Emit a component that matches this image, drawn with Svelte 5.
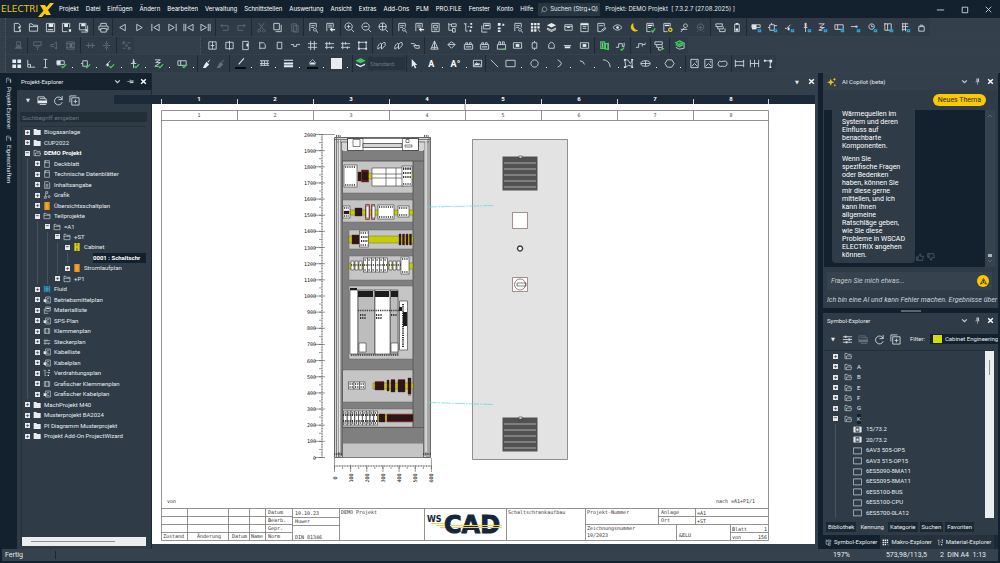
<script lang="ts">
	type Icon = { l?: string; f?: string; g?: string; c?: string; y?: string; o?: string };
	type Node = { depth: number; label: string; icon?: string; open?: boolean; leaf?: boolean; bold?: boolean; selected?: boolean };

	const menu = [
		'Projekt', 'Datei', 'Einfügen', 'Ändern', 'Bearbeiten', 'Verwaltung', 'Schnittstellen', 'Auswertung',
		'Ansicht', 'Extras', 'Add-Ons', 'PLM', 'PRO.FILE', 'Fenster', 'Konto', 'Hilfe'
	];

	// l = line, f = fill, g = green line, c = cyan line, y = yellow fill, o = orange fill
	const icons: Record<string, Icon> = {
		new: { l: 'M7 1.5H2.5v9H8M7 1.5l2 2V6', f: 'M7 5h2v2H7zM8 8h1.500v3H8z' },
		folder: { l: 'M1.500 10V2h3l1 1.500h5V10zM1.500 5h9' },
		save: { l: 'M1.500 1.500h9v9h-9z', f: 'M4 1.500h5v4H4zM3 8h6v1H3z' },
		saveas: { l: 'M9.500 6V1.500h-8v9H7', f: 'M3.500 1.500h4v4h-4zM8.500 8H11v2.500H8.500z' },
		saveall: { l: 'M1.500 1.500h7v7h-7zM10.500 4v7h-7', f: 'M3.500 1.500h4v3h-4zM8 8h2v2H8z' },
		print: { l: 'M3 4V1.500h6V4M3 8.500H1V4.500h10v4H9M3 7h6v4H3z' },
		left: { l: 'M9 2.500L3 6l6 3.500z' },
		right: { l: 'M3 2.500L9 6l-6 3.500z' },
		first: { l: 'M2 2v8M10 2.500L4 6l6 3.500z' },
		last: { l: 'M10 2v8M2 2.500L8 6 2 9.500z' },
		firstall: { l: 'M1 2v8M3 2v8M11 2.500L5 6l6 3.500z' },
		lastall: { l: 'M9 2v8M11 2v8M1 2.500L7 6 1 9.500z' },
		undo: { l: 'M4 2L2 4l2 2M2 4h8v5H4' },
		redo: { l: 'M8 2l2 2-2 2M10 4H2v5h6' },
		cut: { l: 'M3 1l5 7M9 1L4 8M3.500 8a1.500 1.500 0 1 0 .1 0M8.500 8a1.500 1.500 0 1 0 .1 0' },
		copy: { l: 'M2 1.500h6v7H2zM4 10.500h6V3' },
		paste: { l: 'M3 2h5v8H3zM5 4h5v7H5z' },
		find: { l: 'M2 10V1.500h7V6M3.500 4h4M3.500 6h3M7.500 7a1.500 1.500 0 1 0 .1 0M9 10l2 1.500' },
		listnext: { l: 'M2 10V1.500h7V6M3.500 3.500h4M3.500 5.500h4', f: 'M5 8l3-2v1.500h3v1.500H8V11z' },
		zoomin: { l: 'M5 1a4 4 0 1 0 .1 0M8 8l3 3M3 5h4M5 3v4' },
		zoomout: { l: 'M5 1a4 4 0 1 0 .1 0M8 8l3 3M3 5h4' },
		zoomfit: { l: 'M5 1a4 4 0 1 0 .1 0M8 8l3 3M1 5h8M5 1v8' },
		frame: { l: 'M2 1.500h8v9H2zM4 3.500h4v3H4zM4 8.500h4' },
		treeview: { l: 'M2 1v8h4M2 3h3M5 2h5v3H5zM6 7h3v4H6z' },
		list: { l: 'M1 2h3M3 2v8h2M5 5h2', f: 'M8 1h2v2H8zM8 4.500h2v2H8zM7 8.500h2v2H7z' },
		stack: { l: 'M4 1.500h7v6H4zM2 4v7h6', f: 'M5 3h5v1.500H5z' },
		blocks: { f: 'M2 1h3v3H2zM2 6h3v2H2zM2 9h3v2H2zM7 2h2v2H7z' },
		grid: { f: 'M1 1h2.500v2.500H1zM4.500 1H7v2.500H4.500zM8 1h2.500v2.500H8zM1 4.500h2.500V7H1zM4.500 4.500H7V7H4.500zM8 4.500h2.500V7H8zM1 8h2.500v2.500H1zM4.500 8H7v2.500H4.500z', l: 'M9 8l2 3' },
		layers: { f: 'M6 1l5 2.500L6 6 1 3.500zM1 6l5 2.500L11 6v1L6 9.500 1 7zM1 8.500L6 11l5-2.500v-1L6 10 1 7.500z' },
		box: { l: 'M2 3h8v6H2zM2 5h8', f: 'M4.500 5h3v1.500h-3z' },
		sheet: { l: 'M2 1.500h8v9H2zM4 5h4M4 7h4', f: 'M2 1.500h8v2H2z' },
		edit: { l: 'M9 5V1.500H2v9h4M3.500 4h4M6 9l4-3 1 1-4 3z' },
		eye: { l: 'M1 6q5-6 10 0-5 6-10 0z', f: 'M6 4.500a1.500 1.500 0 1 0 .1 0' },
		moon: { y: 'M5 1a4.800 4.800 0 1 0 5 8C6 9 4 5 5 1z' },
		sheetok: { l: 'M9 5V1.500H2v9h4M3.500 6h3', f: 'M3 3h5v1.500H3z', g: 'M7 9l1.500 2L11 7' },
		sheetadd: { l: 'M9 5V1.500H2v9h4', f: 'M3 3h5v1.500H3z', y: 'M9 6a2.500 2.500 0 1 0 .1 0zM9 7.500a1 1 0 1 1-.1 0z' },
		tool: { l: 'M7 2a2 2 0 1 0 .1 0M6 6l-4 5M2 8h7' },
		gear: { l: 'M6 2a3.500 3.500 0 1 0 .1 0M6 4v4M4 6h4M3 10l-1 1M9 10l1 1' },
		windows: { l: 'M1 2h7v3H1zM3 5v2.500h6V5M5 8v2.500h6V7' },
		battery: { l: 'M4 2.500h5v8H4z', f: 'M5 1h3v2H5zM5 7h3v2.500H5z' },
		devlink: { l: 'M1 3h9v3H1z', f: 'M1 3h5v5H1z', c: 'M8 8.500h2.500v2H8z' },
		devring: { l: 'M3 3h5v6H3zM1 6h2M8 4h3M5 1v2', c: 'M8 8.500h2.500v2H8z' },
		devpoint: { l: 'M1 7h2l4-4', f: 'M4 6h2v3H4z', c: 'M8 8.500h2.500v2H8z' },
		devpin: { l: 'M5 1v10M3 6h4', f: 'M4 1h2v4H4z', c: 'M8 8.500h2.500v2H8z' },
		devcoil: { l: 'M2 2h6L3 6h5L2 9h4', c: 'M8 8.500h2.500v2H8z' },
		devbox: { l: 'M1 3h9v5H1zM4 3v5', c: 'M8 8.500h2.500v2H8z' },
		devline: { l: 'M1 5h7', f: 'M6 4h2v2H6z', c: 'M8 8.500h2.500v2H8z' },
		devclock: { l: 'M5 2a3 3 0 1 0 .1 0M5 3v2h2', c: 'M8 8.500h2.500v2H8z' },
		devframe: { l: 'M2 2h7v7H2zM5 2v7M1 2h2', c: 'M8 8.500h2.500v2H8z' },
		devgrid: { l: 'M2 2h7M2 5h7M2 8h5M3 1v9M6 1v9', c: 'M8 8.500h2.500v2H8z' },
		lock: { l: 'M3 5h6v5H3zM4.500 5V3.500h3V5' },
		stamp: { l: 'M4 2h4v4H4zM2 9h8', f: 'M3 7h6v1.500H3z' },
		plug: { l: 'M2 2h8v4H2zM4 6l2 3 2-3M6 9v2' },
		sound: { l: 'M2 5h3l3-3v8L5 7H2z' },
		select: { l: 'M2 2h8v8H2zM1 4h10M1 8h10', f: 'M5 4h3v4H5z' },
		spread: { l: 'M1 6h10M4 3v6M8 3v6' },
		align: { l: 'M2 6h8M6 1v3M6 11V8M4 3l2 2 2-2M4 9l2-2 2 2' },
		scatter: { l: 'M2 2h2v2H2zM8 8h2v2H8zM7 3h3M2 9h3', f: 'M5 5h2v2H5z' },
		cross: { l: 'M2 2h8v8H2zM6 4v4M4 6h4M6 2v2M6 8v2' },
		cabinet: { l: 'M2 2.500h8v7H2zM6 1v10' },
		door: { l: 'M3 1.500h6v9H3z', f: 'M7 4h2v3H7z' },
		cap: { l: 'M3 2v8M3 3h4l2 2v4H3' },
		rect: { l: 'M3.500 2.500h5v7h-5z' },
		wire: { l: 'M1 5h3v2h3V5h4' },
		hash: { l: 'M1 4h10M1 8h10M4 1v10M8 1v10' },
		hash2: { l: 'M1 4h10M1 8h10M3 2v8M6 2v3M8 7v3' },
		selection: { l: 'M2 2.500h8v7H2z', f: 'M1 1.500h2v2H1zM9 1.500h2v2H9zM1 8.500h2v2H1zM9 8.500h2v2H9z' },
		leaf: { l: 'M2 10V7q3-5 4-3v3zM6 10V5q3-4 4-2v3z' },
		cable: { l: 'M1 4q5-1 6 3M4 6h6v3H6z' },
		cone: { l: 'M6 1l4 9H2zM6 1v9M3 8h6' },
		cube: { l: 'M6 2l4 3-4 4-4-4zM2 5h8' },
		terminal: { l: 'M1.500 5h9v5h-9zM3 5V3h2v2M7 5V3h2v2', f: 'M3 7h6v1H3z' },
		terminaladd: { l: 'M1.500 5h9v5h-9zM3 5V2h2v3M7 5V2h2v3', g: 'M8 10h3' },
		chip: { l: 'M1.500 3h9v6h-9z', f: 'M4 4.500h4v3H4z' },
		contact: { l: 'M3.500 3h5v6h-5zM6 1v2M6 9v2' },
		bell: { l: 'M3 9h6V5q-3-5-6 0z' },
		tray: { f: 'M3 7h6v2H3z', l: 'M2 6h8' },
		panelgreen: { g: 'M2 2h4v7H2zM7 4h3v6H7z', l: 'M10 3v8M4 3v5' },
		netok: { l: 'M1 8h3V4h4v3h2V3', g: 'M6 10l1.500 1L10 8' },
		net: { l: 'M1 8h3V4h4v3M8 5h3V3' },
		winadd: { l: 'M1 2h8v3H1zM3 5v3h6V6M5 8v3h3', g: 'M9 8v3M8 9.500h3' },
		layersgreen: { g: 'M6 1l4 2-4 2-4-2zM2 5l4 2 4-2M6 3h1', l: 'M2 8l4 2 5-1V3' },
		tiles: { f: 'M1.500 1.500h4v4h-4zM7 1.500h4v4H7zM1.500 7h4v4h-4zM7 7h4v4H7z' },
		corner: { l: 'M3 2v8h8M3 7h3v3' },
		ibeam: { l: 'M4 1.500h4M6 1.500v9M4 10.500h4' },
		relay: { l: 'M1 3h8v4H1z', f: 'M1 3h4v5H1z', g: 'M6 9l1.500 1.500L11 7' },
		ring: { l: 'M3 3h5v6H3zM1 6h2', g: 'M6 9l1.500 1.500L11 7' },
		dots: { l: 'M2 8l5-5', f: 'M3 6h2v3H3z', g: 'M6 9l1.500 1.500L11 7' },
		pin: { l: 'M5 1v10M2 6h6', f: 'M4 3h2v3H4z', g: 'M6 9l1.500 1.500L11 7' },
		coil: { l: 'M2 2h6L3 5h5L2 9h4', g: 'M6 9l1.500 1.500L11 7' },
		panelbox: { l: 'M1 3h9v5H1zM4 3v5', g: 'M6 9l1.500 1.500L11 7' },
		brush: { f: 'M10.500 1L7 4l1 1zM6 4l3 3-4 4H2l2-4z' },
		pen: { f: 'M10 0l1 1-7 8-1-1z' },
		pattern: { l: 'M1 3h10M1 6h10M1 8h10M3 3v5M6 3v5M9 3v5' },
		weight: { f: 'M1 2h10v1H1zM1 5h10v2H1zM1 8h10v2H1z' },
		fill: { l: 'M2 6l4-4 4 4-1 3H3z', f: 'M3 6h6v2H3z' },
		white: { f: 'M0 0h12v12H0z' },
		layersok: { g: 'M6 1l4 2-4 2-4-2zM4 3h4', f: 'M1 6l5 2.500L11 6v1.500L6 10 1 7.500z' },
		cursor: { f: 'M3 1v9l2-2 1.500 3.500 1.500-1L6.500 7.500H9z' },
		image: { l: 'M1.500 2.500h9v7h-9zM2 9l3-4 2 2 1-1 2 2.500', f: 'M3 6h5v2H3z' },
		line: { l: 'M2 2l8 8' },
		rectangle: { l: 'M1 2.500h10v7H1z' },
		circle: { l: 'M6 2a4 4 0 1 0 .1 0' },
		arc: { l: 'M4 2q8 4 0 8' },
		arc2: { l: 'M2 3q4 0 5 4' },
		arc3: { l: 'M1 2q7 0 8 8' },
		poly: { l: 'M2 2h3l3 4 2-3v6l-4-1-3 2z', f: 'M1 1h2v2H1zM9 1h2v2H9zM1 9h2v2H1zM9 9h2v2H9z' },
		ellipse: { l: 'M1 6a5 3 0 1 0 10 0a5 3 0 1 0-10 0M1 6h10M6 3v6' },
		hexagon: { l: 'M3.500 2h5L11 6 8.500 10h-5L1 6z' },
		picture: { l: 'M2 1.500h8v9H2zM3 9l3-3 3 3M8 3v2' },
		cloud: { l: 'M1 6q1-4 4-2 6-2 6 2 0 4-5 3-5 1-5-3z' },
		dim: { l: 'M1.500 2v8M10.500 2v8M1 4h10M1 8h10' },
		dim2: { l: 'M1.500 2v8M6 2v8M10.500 2v8M1 6h10' },
		route: { l: 'M2 3h6v7', f: 'M1 2h2v2H1zM7 2h3v3H7zM7 9h2v2H7z' },
		folderfull: { f: 'M1 1.500h4L6 3h5.500v7.500H1z' },
		folderopen: { l: 'M1.500 10V2h3l1 1.500h5V5M3 10l1-4h7.500l-1 4zM2 10h1' },
		book: { l: 'M2.500 1h7v10h-7zM2.500 4h7M4 1v3' },
		page: { l: 'M2.500 1H8l2 2v8H2.500zM4 5h4M4 7h4M4 9h4' },
		shapes: { l: 'M4 1h3v3H4zM2 8h3v3H2zM9 7a1.500 1.500 0 1 0 .1 0M4 4v4' },
		orange: { o: 'M2 0h8v12H2z' },
		yellow: { y: 'M2 0h3.500v12H2zM6.500 0H10v12H6.500zM4 5h4v2H4z' },
		fluid: { c: 'M2 1v10M10 1v10M3 3h6M3 9h6M5 2v8M7 2v8', l: 'M3 6h6' },
		plan: { l: 'M4 1.500h7v9H4zM1 6h6M6 4h3M6 8h3', f: 'M1 5h4v4H1z' },
		clamp: { l: 'M2 2.500h8v7H2zM4 2v8M8 2v8' },
		refresh: { l: 'M10 5A4.300 4.300 0 1 0 10 8M10 1v4H6' },
		copies: { l: 'M1 8V1h7M3 3h8v8H3zM5 7h4M7 5v4' },
		openproject: { l: 'M1 9V2h7v2M3 4h7v3', f: 'M1 6h10v3H1zM3 10h7v1H3z' },
		sliders: { l: 'M1 3h10M1 6h10M1 9h10', f: 'M3 2h2v2H3zM7 5h2v2H7zM4 8h2v2H4z' },
		outline: { l: 'M.5 2.500h11v8H.5z' },
		plate: { l: 'M1 2.500h10v7H1z', f: 'M1 2.500h2.500v7H1zM8.500 2.500H11v7H8.500zM4.500 4.500h3v3h-3z' },
		text: { l: 'M1 10V2h5M3 5h5v5M8 3v7' },
		thumbup: { l: 'M1 6h2v5H1zM3 6l3-5q2 0 1 4h4l-1 6H3' },
		thumbdown: { l: 'M1 1h2v5H1zM3 6l3 5q2 0 1-4h4l-1-6H3' }
	};

	// '|' is a divider, '~' a faded icon, '+' an icon with a menu dot
	const rowFile = 'new folder save saveas saveall | print | left right first last firstall lastall | ~undo ~redo | ~cut copy ~paste | find listnext | zoomin zoomout zoomfit | find listnext frame treeview list stack blocks find grid layers box sheet edit eye moon sheetok sheetadd tool ~gear | windows battery | devlink devring devpoint devpin devcoil devbox devline devclock devframe devgrid lock'.split(' ');
	const rowAlign = '~stamp | ~plug ~sound ~select | ~spread ~align | ~scatter'.split(' ');
	const rowCabinet = 'cross cabinet door cap rect wire hash hash2 hash2 selection | leaf leaf cable | cone cube terminal terminal terminaladd chip contact bell tray chip | panelgreen netok | net | winadd | layersgreen'.split(' ');
	const rowDraw = 'tiles corner ibeam +relay +ring +dots +pin +coil +panelbox | brush ~brush | +pen +pattern +weight +fill +white | layersok'.split(' ');
	const rowShape = 'cursor +A +A° image | line +rectangle +circle +arc +arc2 +arc3 poly +ellipse +hexagon | picture picture cloud | dim dim2 route'.split(' ');

	const project: Node[] = [
		{ depth: 0, label: 'Biogasanlage', icon: 'folderfull' },
		{ depth: 0, label: 'CUP2022', icon: 'folderfull' },
		{ depth: 0, label: 'DEMO Projekt', icon: 'folderopen', open: true, bold: true },
		{ depth: 1, label: 'Deckblatt', icon: 'book' },
		{ depth: 1, label: 'Technische Datenblätter', icon: 'book' },
		{ depth: 1, label: 'Inhaltsangabe', icon: 'page' },
		{ depth: 1, label: 'Grafik', icon: 'shapes' },
		{ depth: 1, label: 'Übersichtsschaltplan', icon: 'orange' },
		{ depth: 1, label: 'Teilprojekte', icon: 'folder', open: true },
		{ depth: 2, label: '=A1', icon: 'folder', open: true },
		{ depth: 3, label: '+ST', icon: 'folder', open: true },
		{ depth: 4, label: 'Cabinet', icon: 'yellow', open: true },
		{ depth: 5, label: '0001 : Schaltschr', leaf: true, bold: true, selected: true },
		{ depth: 4, label: 'Stromlaufplan', icon: 'orange' },
		{ depth: 3, label: '+P1', icon: 'folder' },
		{ depth: 1, label: 'Fluid', icon: 'fluid' },
		{ depth: 1, label: 'Betriebsmittelplan', icon: 'plan' },
		{ depth: 1, label: 'Materialliste', icon: 'stack' },
		{ depth: 1, label: 'SPS-Plan', icon: 'plan' },
		{ depth: 1, label: 'Klemmenplan', icon: 'clamp' },
		{ depth: 1, label: 'Steckerplan', icon: 'hash2' },
		{ depth: 1, label: 'Kabelliste', icon: 'plan' },
		{ depth: 1, label: 'Kabelplan', icon: 'plan' },
		{ depth: 1, label: 'Verdrahtungsplan', icon: 'list' },
		{ depth: 1, label: 'Grafischer Klemmenplan', icon: 'clamp' },
		{ depth: 1, label: 'Grafischer Kabelplan', icon: 'plan' },
		{ depth: 0, label: 'MachProjekt M40', icon: 'folderfull' },
		{ depth: 0, label: 'Musterprojekt BA2024', icon: 'folderfull' },
		{ depth: 0, label: 'PI Diagramm Musterprojekt', icon: 'folderfull' },
		{ depth: 0, label: 'Projekt Add-On ProjectWizard', icon: 'folderfull' }
	];

	const symbols: Node[] = [
		...['', 'A', 'B', 'E', 'F', 'G'].map((label) => ({ depth: 0, label, icon: 'folderopen' })),
		{ depth: 0, label: 'K', icon: 'folderopen', open: true, selected: true },
		...['15/73.2', '20/73.2'].map((label) => ({ depth: 1, label, icon: 'plate', leaf: true })),
		...['6AV3 505-OP5', '6AV3 515-OP15', '6ES5090-8MA11', '6ES5095-8MA11', '6ES5100-BUS', '6ES5100-CPU', '6ES5700-0LA12']
			.map((label) => ({ depth: 1, label, icon: 'outline', leaf: true }))
	];

	const columns = [1, 2, 3, 4, 5, 6, 7, 8];
	const count = (n: number) => Array.from({ length: n }, (_, i) => i);

	let query = $state('');
	let question = $state('');
	let search = $state('');
</script>

{#snippet icon(name: string)}
	{@const i = icons[name] ?? {}}
	<svg class="icon" viewBox="0 0 12 12" aria-hidden="true">
		{#if i.o}<path class="orange" d={i.o} /><path class="ln" d="M6 2v3M6 7v3M5 5l1 2" />{/if}
		{#if i.y}<path class="yellow" d={i.y} />{/if}
		{#if i.f}<path class="fl" d={i.f} />{/if}
		{#if i.l}<path class="ln" d={i.l} />{/if}
		{#if i.g}<path class="ln green" d={i.g} />{/if}
		{#if i.c}<path class="ln cyan" d={i.c} />{/if}
	</svg>
{/snippet}

{#snippet tools(items: string[])}
	{#each items as item}
		{#if item === '|'}
			<span class="divider"></span>
		{:else}
			{@const name = item.replace(/[~+]/, '')}
			<button class="tool" class:menu-dot={item[0] === '+'} class:faded={item[0] === '~'} class:ink={name === 'pen' || name === 'fill'} title={name}>
				{#if name[0] === 'A'}<b class="letter">{name}</b>{:else}{@render icon(name)}{/if}
			</button>
		{/if}
	{/each}
{/snippet}

{#snippet tree(nodes: Node[])}
	{#each nodes as node}
		<li class="node" class:bold={node.bold} class:leaf={node.leaf}>
			{#each count(node.depth) as _}<span class="guide"></span>{/each}
			{#if !node.leaf}<button class="expander" aria-label={node.open ? 'Zuklappen' : 'Aufklappen'}>{node.open ? '−' : '+'}</button>{/if}
			{#if node.icon}{@render icon(node.icon)}{/if}
			<span class="node-label" class:selected={node.selected}>{node.label}</span>
		</li>
	{/each}
{/snippet}

{#snippet panelButtons(flat: boolean)}
	<span class="panel-buttons">
		<button aria-label="Menü"><svg class="icon" viewBox="0 0 12 12"><path class="ln thick" d="M2 4l4 4 4-4" /></svg></button>
		<button aria-label="Anheften">
			<svg class="icon" class:flat viewBox="0 0 12 12"><path class="ln" d="M4 1.500h5M4.500 1.500v5M7.500 1.500v5M2.500 6.500h7M6 6.500v5" /><path class="fl" d="M6 2h2v4H6z" /></svg>
		</button>
		<button aria-label="Schließen"><svg class="icon" viewBox="0 0 12 12"><path class="ln heavy" d="M2 2l8 8M10 2l-8 8" /></svg></button>
	</span>
{/snippet}

<!-- DIN rail device: box with contact rows -->
{#snippet device(x: number, y: number, w: number, h: number)}
	<rect class="dev" {x} {y} width={w} height={h} />
	<path class="contacts" d="M{x + 1} {y + 2}h{w - 2}M{x + 1} {y + h - 2}h{w - 2}" />
{/snippet}

{#snippet vent(y: number)}
	<rect class="vent" x="503" {y} width="34" height="33" />
	{#each count(16) as i}
		<path class="slat" class:bright={i % 3 === 2} d="M504 {y + 2 + i * 2}h32" />
	{/each}
	<rect class="dev" x="519" y={y - 1} width="3" height="2" />
{/snippet}

<div class="app">
	<header class="titlebar">
		<svg class="brand" viewBox="0 0 54 18" role="img" aria-label="ELECTRIX">
			<text x="1" y="12" class="brand-text">ELECTRI</text>
			<path class="brand-x" d="M50 3h4L42 17h-4zM40 5h5l6 10h-5z" />
		</svg>
		<nav class="menu">
			{#each menu as item}<a href="#{item}">{item}</a>{/each}
		</nav>
		<label class="quick">
			<svg class="icon" viewBox="0 0 12 12"><path class="ln" d="M6 1.500a4 4 0 1 0 .1 0M3 8l-2 3" /></svg>
			<input bind:value={search} placeholder="Suchen (Strg+Q)" aria-label="Suchen" />
		</label>
		<span class="title">Projekt: DEMO Projekt&nbsp; [ 7.3.2.7 (27.08.2025) ]</span>
		<div class="window-buttons">
			<button aria-label="Minimieren"><svg class="icon" viewBox="0 0 12 12"><path class="ln" d="M2 6.500h8" /></svg></button>
			<button aria-label="Maximieren"><svg class="icon" viewBox="0 0 12 12"><path class="ln" d="M3.500 3.500h6v6h-6z" /></svg></button>
			<button aria-label="Schließen"><svg class="icon" viewBox="0 0 12 12"><path class="ln" d="M3 3l6 6M9 3l-6 6" /></svg></button>
		</div>
	</header>

	<div class="toolrow"><div class="bar bar-file">{@render tools(rowFile)}</div></div>
	<div class="toolrow">
		<div class="bar bar-align">{@render tools(rowAlign)}</div>
		<div class="bar bar-cabinet">{@render tools(rowCabinet)}</div>
	</div>
	<div class="toolrow">
		<div class="bar bar-draw">
			{@render tools(rowDraw)}
			<select class="layer" aria-label="Ebene" disabled><option>Standard</option></select>
			<span class="divider"></span>
			{@render tools(rowShape)}
		</div>
	</div>

	<main>
		<aside class="side-tabs">
			<a href="#explorer">{@render icon('text')}Projekt-Explorer</a>
			<a href="#props">{@render icon('text')}Eigenschaften</a>
		</aside>

		<section class="explorer">
			<h2 class="panel-head dark-head">Projekt-Explorer{@render panelButtons(true)}</h2>
			<div class="panel-tools">
				<button class="caret" aria-label="Mehr">▼</button>
				<button aria-label="Öffnen">{@render icon('openproject')}</button>
				<button aria-label="Aktualisieren">{@render icon('refresh')}</button>
				<button aria-label="Kopieren">{@render icon('copies')}</button>
			</div>
			<input class="filter" bind:value={query} placeholder="Suchbegriff eingeben" aria-label="Suchbegriff" />
			<div class="tree-box">
				<ul class="tree project">{@render tree(project)}</ul>
				<div class="hscroll"><span></span></div>
			</div>
		</section>

		<section class="document">
			<div class="doc-head">
				<button class="caret" aria-label="Dokumente">▼</button>
				<button aria-label="Schließen"><svg class="icon" viewBox="0 0 12 12"><path class="ln heavy" d="M2 2l8 8M10 2l-8 8" /></svg></button>
			</div>
			<div class="ruler">
				{#each columns as c}<span>{c}</span>{/each}
			</div>
			<svg class="sheet" viewBox="152 104 663 440" preserveAspectRatio="xMinYMin meet">
				<!-- frame and column strip -->
				<path class="frame" d="M161.500 110.500h607v430h-607zM161.500 120.500h607M465 104v6" />
				{#each columns as c}
					<text class="col" x={123 + c * 76} y="117">{c}</text>
					{#if c < 8}<path class="frame" d="M{161.5 + c * 76} 110.500v10" />{/if}
				{/each}

				<!-- millimetre scales -->
				{#each count(21) as i}
					<path class="scale" d="M315 {134.5 + i * 16.15}h{i === 0 ? 20 : 10}" />
					<text class="mm" text-anchor="end" x="316" y={136.5 + i * 16.15}>{2000 - i * 100}</text>
				{/each}
				{#each count(201) as i}
					<path class="scale" d="M{i % 5 ? 321 : 319} {134.5 + i * 1.615}h{i % 5 ? 2 : 4}" />
				{/each}
				{#each count(61) as i}
					<path class="scale" d="M{334.5 + i * 1.615} 465v{i % 5 ? 2 : 4}" />
				{/each}
				{#each count(7) as i}
					<path class="scale" d="M{334.5 + i * 16.15} {i === 0 || i === 6 ? 458 : 465}v{i === 0 || i === 6 ? 14 : 7}" />
					<text class="mm" text-anchor="middle" transform="translate({336.5 + i * 16.15} 478) rotate(-90)">{i * 100}</text>
				{/each}

				<!-- cabinet housing -->
				<path class="metal" d="M334.500 137.500h96v320h-96z" />
				<path class="housing" d="M336.500 138v319M338.500 140v317M340 140v317M341.500 142v314M425 142v314M427 140v317M429 138v319M335 139.500h95M337 142h92" />
				<path class="white-line" d="M339.200 140v312M426 140v312" />
				<path class="duct" d="M342.500 151h81v292h-81z" />
				<path class="plate" d="M342.500 161h70.500v32h-70.500zM342.500 200h70.500v22h-70.500zM349 230h64v19h-64zM349 256h64v24h-64zM349 286h64v73h-64zM342.500 370h70.500v32h-70.500zM342.500 409h70.500v18h-70.500zM342.500 443.500h81v14h-81z" />
				<path class="inner" d="M342.500 150v307M423.500 150v307M413 161v266M342.500 161h81M342.500 427.500h81" />
				<path class="dev" d="M347.500 138.500h71v12h-71zM347.500 138.500h15.500v12h-15.500zM402.500 138.500h16v12h-16zM353 139.500h7v7h-7zM406 139.500h3v3h-3zM405 145h7v2h-7z" />
				<path class="metal" d="M363 143.500h39v4h-39z" />
				<path class="contacts" d="M336 136h5M424 136h5M334 454h8M423 454h8" />

				<!-- row 1 -->
				<path class="rail" d="M361 173h52v6h-52z" />
				{@render device(344, 165, 13, 22)}
				<path class="dark" d="M358 172h3v9h-3zM361.500 170h7v12h-7z" />
				<path class="red" d="M362 171h6M362 181h6" />
				<path class="dev" d="M372 168h32v18h-32zM386 168v18M396 168v18M372 174h32M372 178h32" />
				{@render device(402, 166, 10, 20)}
				<path class="hatch" d="M403 169h8M403 173h8M403 177h8" />
				<!-- row 2 -->
				<path class="rail" d="M343 210h70v5h-70z" />
				{@render device(343, 206, 7, 12)}
				<path class="dark" d="M344 211h5v3h-5zM355 208h7v8h-7z" />
				<path class="red" d="M365.500 204.500h4v15h-4zM371.500 204.500h3v15h-3z" />
				<path class="dev" d="M366 206h3v12h-3zM372 206h3v12h-3z" />
				{@render device(378, 205, 16, 14)}
				{@render device(398, 206, 11, 11)}
				<!-- row 3 -->
				<path class="rail" d="M349 236h64v7h-64z" />
				<path class="dark" d="M352 235h7v9h-7z" />
				{@render device(359.500, 231, 9, 16)}
				<path class="hatch" d="M361 237h7M361 241h7" />
				{#each count(4) as i}<path class="dark" d="M{399 + i * 3.5} 234h2v11h-2z" />{/each}
				<!-- row 4 -->
				<path class="rail" d="M349 263h64v6h-64z" />
				{#each count(3) as i}<path class="dev" d="M{351 + i * 4} 261h3v9h-3z" /><path class="dev" d="M{389 + i * 4} 261h3v9h-3z" />{/each}
				{#each count(6) as i}
					{@render device(363.500 + i * 4, 258, 4, 14)}
				{/each}
				<path class="contacts" d="M364 265h24M351 265h12M389 265h12" />
				{@render device(401, 257, 8, 17)}
				<!-- controller block -->
				<path class="dev" d="M350 290h8v64h-8z" />
				<path class="dev plate" d="M358 290h17v64h-17zM390 290h8v64h-8z" />
				<path class="dev" d="M375 290h15v64h-15z" />
				<path class="black" d="M350 288h7v2h-7zM358 291h15v6h-15zM375 291h14v6h-14zM391 291h7v6h-7z" />
				<path class="contacts" d="M358 310.500h41M351 355h48" />
				<path class="hatch" d="M360 315h6M360 318h6M376 315h6M376 318h6M391 315h6" />
				<path class="dev" d="M359 343h7v9h-7zM391 343h7v9h-7zM399.500 301h8v49h-8z" />
				<path class="hatch" d="M403 304v44" />
				<path class="black" d="M403 312h4v14h-4zM399 307h3v4h-3z" />
				<!-- row 6 -->
				{#each count(3) as i}
					{@render device(348.500 + i * 5.500, 382, 5.500, 7)}
				{/each}
				<path class="rail" d="M373 383h40v6h-40z" />
				<path class="dark" d="M375 382h9v8h-9zM387 380h2v11h-2zM391 380h4v12h-4zM398 380h7v12h-7zM408 378h3v16h-3z" />
				<path class="red" d="M375 381.500h9M391 379.500h4M398 379.500h7M408 395h3" />
				<!-- row 7 -->
				{#each count(9) as i}
					{@render device(343.500 + i * 3.800, 411, 3.500, 14)}
				{/each}
				<path class="hatch" d="M343 415h35M343 421h35" />
				<path class="rail" d="M378 415h35v6h-35z" />
				<path class="dark" d="M379 414h6v8h-6zM387 414h26v8h-26z" />
				<path class="red" d="M387 414.500h26M387 421.500h26" />

				<!-- door -->
				<path class="door" d="M472.500 139.500h95v320h-95z" />
				{@render vent(157)}
				{@render vent(418)}
				<path class="dev redline" d="M512.500 212.500h15v16h-15zM512.500 277.500h15v14h-15z" />
				<path class="dev strong" d="M520 246a2.500 2.500 0 1 0 .1 0z" />
				<path class="dev" d="M520 279a5.500 5.500 0 1 0 .1 0zM517 283h9v3h-9z" />
				<path class="guideline" d="M427 207l67-1.500M427 402.500l67 2" />

				<!-- title block -->
				<path class="frame" d="M161.500 508.500h607M161.500 516.500h131M161.500 524.500h131M161.500 532.500h131M187.500 508.500v32M228.500 508.500v32M249.500 508.500v32M265.500 508.500v32M292.500 508.500v32M339.500 508.500v32M424.500 508.500v32M506.500 508.500v32M585.500 508.500v32M658.500 508.500v16M695.500 508.500v16M658.500 516.500h110M585.500 524.500h183M676.500 524.500v16M730.500 524.500v16M730.500 532.500h38" />
				<path class="frame" d="M292.500 517.500h47M292.500 525.500h47" />
				<g class="plan-text">
					<text x="167" y="503">von</text><text x="716" y="503">nach =A1+P1/1</text>
					<text x="163" y="538">Zustand</text><text x="197" y="538">Änderung</text><text x="232" y="538">Datum</text><text x="251" y="538">Name</text>
					<text x="268" y="514">Datum</text><text x="268" y="522">Bearb.</text><text x="268" y="530">Gepr.</text><text x="268" y="538">Norm</text>
					<text x="295" y="515">10.10.23</text><text x="295" y="523">Huwer</text><text x="295" y="539">DIN 81346</text>
					<text x="341" y="514">DEMO Projekt</text><text x="508" y="514">Schaltschrankaufbau</text>
					<text x="587" y="514">Projekt-Nummer</text><text x="587" y="530">Zeichnungsnummer</text><text x="587" y="537">10/2023</text>
					<text x="661" y="514">Anlage</text><text x="661" y="522">Ort</text><text x="697" y="515">=A1</text><text x="697" y="523">+ST</text>
					<text x="679" y="537">&amp;ELU</text><text x="732" y="531">Blatt</text><text x="732" y="539">von</text>
					<text x="767" y="531" text-anchor="end">1</text><text x="767" y="539" text-anchor="end">156</text>
				</g>
				<path class="stripe" d="M430 523h18v1h-16zM436 525h66v1h-66zM440 527h62v1h-62z" />
				<text class="ws" x="427" y="522">WS</text>
				<text class="cad" x="444" y="533">CAD</text>
				<path class="stripe" d="M450 525h50v1h-50zM454 527h46v1h-46z" />
			</svg>
		</section>

		<aside class="right">
			<section class="copilot">
				<h2 class="panel-head">
					<svg class="spark" viewBox="0 0 12 12"><path class="yellow" d="M4.500 2l1.300 3 3 1.300-3 1.300-1.300 3-1.300-3-3-1.300 3-1.300zM9 .5l.6 1.500 1.500.6-1.500.6L9 5l-.6-1.500L7 2.800l1.500-.6zM9.500 8l.5 1.300 1.300.5-1.300.5-.5 1.300-.5-1.300-1.300-.5 1.300-.5z" /></svg>
					AI Copilot (beta){@render panelButtons(false)}
				</h2>
				<div class="topic"><button>Neues Thema</button></div>
				<div class="chat">
					<div class="bubble">
						<p>Wärmequellen im System und deren Einfluss auf benachbarte Komponenten.</p>
						<p>Wenn Sie spezifische Fragen oder Bedenken haben, können Sie mir diese gerne mitteilen, und ich kann Ihnen allgemeine Ratschläge geben, wie Sie diese Probleme in WSCAD ELECTRIX angehen können.</p>
					</div>
					<div class="votes">
						<button aria-label="Gut">{@render icon('thumbup')}</button>
						<button aria-label="Schlecht">{@render icon('thumbdown')}</button>
					</div>
					<div class="vscroll">
						<svg class="icon" viewBox="0 0 12 12"><path class="ln" d="M2 8l4-4 4 4" /></svg>
						<span></span>
						<svg class="icon" viewBox="0 0 12 12"><path class="ln" d="M2 4l4 4 4-4" /></svg>
					</div>
				</div>
				<form class="ask">
					<input bind:value={question} placeholder="Fragen Sie mich etwas..." aria-label="Frage" />
					<button type="button" aria-label="Senden"><svg viewBox="0 0 12 12"><path d="M6 2l4 7.500-4-2-4 2zM6 4v3.500" /></svg></button>
				</form>
				<p class="hint">Ich bin eine AI und kann Fehler machen. Ergebnisse über</p>
			</section>

			<div class="splitter"></div>

			<section class="symbols">
				<h2 class="panel-head plain">Symbol-Explorer{@render panelButtons(false)}</h2>
				<div class="panel-tools">
					<button class="caret" aria-label="Mehr">▼</button>
					<button aria-label="Einstellungen">{@render icon('sliders')}</button>
					<button class="faded" aria-label="Öffnen">{@render icon('openproject')}</button>
					<button aria-label="Aktualisieren">{@render icon('refresh')}</button>
					<button aria-label="Kopieren">{@render icon('copies')}</button>
					<label for="kind">Filter:</label>
					<span class="kind"><i></i><select id="kind"><option>Cabinet Engineering</option></select></span>
				</div>
				<div class="symbol-box">
					<ul class="tree">{@render tree(symbols)}</ul>
					<div class="bright-scroll"><span></span></div>
				</div>
				<nav class="tabs">
					{#each ['Bibliothek', 'Kennung', 'Kategorie', 'Suchen', 'Favoriten'] as tab}
						<a href="#{tab}" class:active={tab === 'Kennung'}>{tab}</a>
					{/each}
				</nav>
				<nav class="dock">
					<a href="#symbol" class="active">{@render icon('treeview')}Symbol-Explorer</a>
					<a href="#makro">{@render icon('grid')}Makro-Explorer</a>
					<a href="#material">{@render icon('list')}Material-Explorer</a>
				</nav>
			</section>
		</aside>
	</main>

	<footer class="status">
		<span class="ready">Fertig</span>
		<span class="zoom">197%</span>
		<span class="position">573,98/113,5</span>
		<span class="format">2&nbsp; DIN A4&nbsp; 1:13</span>
	</footer>
</div>

<style>
	:global(body) {
		background: #13202c;
	}

	.app {
		--base: #2f3c48;
		--light: #35424e;
		--dark: #13212e;
		--text: #e6ebef;
		height: 100vh;
		display: flex;
		flex-direction: column;
		overflow: hidden;
		background: var(--dark);
		color: var(--text);
		font: 6px/8px Roboto, sans-serif;
	}

	:where(.app) :is(h2, p, ul) {
		margin: 0;
		padding: 0;
		font-weight: 400;
		font-size: inherit;
		list-style: none;
	}

	button,
	input,
	select {
		margin: 0;
		padding: 0;
		border: 0;
		border-radius: 0;
		background: none;
		color: inherit;
		font: inherit;
		appearance: none;
		outline: 0;
	}

	button {
		display: flex;
		align-items: center;
		justify-content: center;
	}

	a {
		color: inherit;
		text-decoration: none;
	}

	/* icons */
	.icon {
		width: 11px;
		height: 11px;
		flex: none;
	}

	.ln {
		fill: none;
		stroke: #c9d1d7;
		stroke-width: 1;
	}

	.ln.thick { stroke-width: 2; }
	.ln.heavy { stroke: #fff; stroke-width: 2.4; }
	.ln.green { stroke: #43d05c; stroke-width: 1.4; }
	.ln.cyan { stroke: #25a5d8; stroke-width: 1.3; }
	.fl { fill: #e8ecef; }
	.yellow { fill: #e3c90f; }
	.orange { fill: #f39314; }

	.faded {
		opacity: 0.3;
	}

	/* title bar */
	.titlebar {
		height: 18px;
		flex: none;
		display: flex;
		align-items: center;
		font-family: Inter, sans-serif;
	}

	.brand {
		width: 54px;
		height: 18px;
		margin-right: 5px;
	}

	.brand-text {
		font: 9px 'DejaVu Sans', sans-serif;
		fill: #f2c414;
	}

	.brand-x {
		fill: #fccb0a;
	}

	.menu {
		display: flex;
		gap: 7px;
		color: #fff;
	}

	.quick {
		display: flex;
		align-items: center;
		gap: 2px;
		height: 13px;
		width: 62px;
		margin-left: 5px;
		padding-left: 3px;
		box-sizing: border-box;
		background: #283642;
	}

	.quick .icon {
		width: 7px;
		height: 7px;
	}

	.quick input {
		width: 50px;
		min-width: 0;
		flex: 1;
	}

	.quick input::placeholder {
		color: #e9edf0;
	}

	.title {
		margin-left: 5px;
	}

	.window-buttons {
		display: flex;
		gap: 13px;
		margin-left: auto;
		margin-right: 6px;
	}

	/* tool bars */
	.toolrow {
		flex: none;
		height: 18px;
		display: flex;
		padding-left: 5px;
		border-bottom: 1px solid #35424d;
		box-sizing: border-box;
		background: #33404b;
	}

	.toolrow:nth-child(2) {
		height: 19px;
	}

	.bar {
		display: flex;
		align-items: stretch;
		padding-left: 3px;
		background: var(--base);
		border-left: 1px dotted #4d5964;
		box-sizing: border-box;
	}

	.bar-file { width: 93%; }
	.bar-align { width: 13%; padding-left: 4px; margin-right: 66px; }
	.bar-cabinet { width: 49%; }
	.bar-draw { width: 77.5%; }

	.tool {
		flex: 50 1 0;
		min-width: 0;
		position: relative;
	}

	.menu-dot {
		flex-grow: 66;
		padding-right: 5px;
	}

	.menu-dot::after {
		content: '';
		position: absolute;
		right: 3px;
		bottom: 4px;
		width: 1px;
		height: 1px;
		background: #fff;
	}

	.ink .icon {
		border-bottom: 2px solid #080c10;
		height: 9px;
	}

	.letter {
		font-size: 9px;
		color: #fff;
	}

	.divider {
		flex: 9 1 0;
		background: linear-gradient(#1d2a36, #1d2a36) center / 1px 100% no-repeat;
	}

	.layer {
		flex: 120 1 0;
		min-width: 0;
		margin: 2px 0;
		padding-left: 2px;
		background: #27343f;
		color: #697681;
		opacity: 1;
	}

	/* layout */
	main {
		flex: 1;
		min-height: 0;
		display: flex;
	}

	.side-tabs {
		width: 17px;
		flex: none;
		box-sizing: border-box;
		padding: 4px 4px 0 5px;
		display: flex;
		flex-direction: column;
		gap: 6px;
	}

	.side-tabs a {
		writing-mode: vertical-rl;
		display: flex;
		align-items: center;
		gap: 3px;
	}

	.side-tabs .icon {
		width: 7px;
		height: 7px;
	}

	.panel-head {
		height: 17px;
		flex: none;
		display: flex;
		align-items: center;
		padding: 0 4px;
		background: #343f4c;
	}

	.panel-head.dark-head { background: #16232f; }
	.panel-head.plain { background: none; }

	.panel-buttons {
		margin-left: auto;
		display: flex;
		gap: 6px;
	}

	.panel-buttons .icon,
	.doc-head .icon {
		width: 7px;
		height: 7px;
	}

	.flat {
		transform: rotate(90deg);
	}

	.panel-tools {
		height: 20px;
		flex: none;
		display: flex;
		align-items: center;
		gap: 5px;
	}

	.caret {
		font: 5px/8px 'DejaVu Sans', sans-serif;
		width: 8px;
	}

	.explorer {
		width: 135px;
		flex: none;
		display: flex;
		flex-direction: column;
		background: var(--base);
		border-right: 1px solid #1b2935;
		box-sizing: border-box;
	}

	.explorer .panel-tools {
		padding-left: 7px;
	}

	.filter {
		height: 10px;
		flex: none;
		margin: 2px 4px 3px 3px;
		padding-left: 2px;
		background: #222e38;
	}

	.filter::placeholder {
		color: #6b7883;
	}

	.tree-box {
		flex: 1;
		min-height: 0;
		margin: 1px 5px 3px 4px;
		border-top: 1px solid #22303b;
		border-left: 1px solid #22303b;
		display: flex;
		flex-direction: column;
		overflow: hidden;
	}

	.tree {
		display: grid;
		grid-auto-rows: 1fr;
	}

	.tree.project {
		height: 75%;
		padding-left: 3px;
	}

	.hscroll {
		margin-top: auto;
		height: 9px;
		background: #eceded;
		display: flex;
		align-items: center;
	}

	.hscroll span {
		width: 68%;
		height: 1px;
		margin-left: 9px;
		background: #8d8d8d;
	}

	.node {
		min-height: 0;
		display: flex;
		align-items: center;
		white-space: nowrap;
	}

	.node .icon {
		width: 8px;
		height: 8px;
		margin: 0 3px;
	}

	.guide {
		width: 7px;
		flex: none;
		align-self: stretch;
		margin-left: 2px;
		border-left: 1px solid #46535f;
	}

	.expander {
		width: 5px;
		height: 5px;
		flex: none;
		background: #e4e8eb;
		color: #1e2b37;
		font: 700 6px/5px 'Liberation Sans', sans-serif;
	}

	.node.bold {
		font-weight: 700;
		color: #fff;
	}

	.node-label.selected {
		background: var(--dark);
		line-height: 10px;
	}

	.bold .node-label.selected {
		flex: 1;
		margin-left: 18px;
	}

	/* document */
	.document {
		flex: 1;
		min-width: 0;
		display: flex;
		flex-direction: column;
		padding-right: 3px;
		background: #33404b;
	}

	.doc-head {
		height: 22px;
		flex: none;
		display: flex;
		justify-content: flex-end;
		align-items: flex-start;
		gap: 7px;
		padding: 5px 0 0;
		box-sizing: border-box;
	}

	.ruler {
		height: 9px;
		flex: none;
		display: flex;
		margin-left: -38px;
		padding: 0 46px 0 47px;
		z-index: 1;
		background: #1c2938;
		color: #fff;
		font-weight: 700;
	}

	.ruler span {
		flex: 1;
		text-align: center;
		background: linear-gradient(#cfd6db, #cfd6db) left bottom / 1px 5px no-repeat;
	}

	.ruler span:last-child {
		background: linear-gradient(#cfd6db, #cfd6db) left bottom / 1px 5px no-repeat, linear-gradient(#cfd6db, #cfd6db) right bottom / 1px 5px no-repeat;
	}

	.sheet {
		width: 100%;
		background: #fff;
		display: block;
	}

	.frame { fill: none; stroke: #777; stroke-width: 0.8; }
	.scale { stroke: #555; stroke-width: 0.6; }
	.col { font: 5px 'DejaVu Sans Mono', monospace; text-anchor: middle; fill: #444; }
	.mm { font: 5px 'DejaVu Sans Mono', monospace; fill: #111; }
	.plan-text { font: 5px 'DejaVu Sans Mono', monospace; fill: #333; }
	.metal { fill: #d5d5d5; stroke: #444; stroke-width: 0.8; }
	.housing { fill: none; stroke: #555; stroke-width: 0.7; }
	.white-line { stroke: #fff; stroke-width: 1; }
	.duct { fill: #7f7f7f; }
	.plate { fill: #c5c5c5; stroke: #555; stroke-width: 0.4; }
	.inner { fill: none; stroke: #444; stroke-width: 0.6; }
	.dev { fill: #fff; stroke: #333; stroke-width: 0.6; }
	.dev.plate { fill: #bdbdbd; }
	.dev.redline { stroke: #7a4a4a; }
	.dev.strong { stroke-width: 1.4; }
	.contacts { fill: none; stroke: #333; stroke-width: 1.4; stroke-dasharray: 1.2 1; }
	.hatch { fill: none; stroke: #333; stroke-width: 2; stroke-dasharray: 1.2 1; }
	.rail { fill: #c5cc08; stroke: #5d6010; stroke-width: 0.4; }
	.dark { fill: #2a1717; stroke: #5e1a1a; stroke-width: 0.4; }
	.black { fill: #1c1c1c; }
	.red { fill: none; stroke: #9c2a2a; stroke-width: 0.8; }
	.door { fill: #e3e3e3; stroke: #777; stroke-width: 0.8; }
	.vent { fill: #4a4a4a; stroke: #555; }
	.slat { stroke: #666; stroke-width: 0.6; }
	.slat.bright { stroke: #d0d0d0; stroke-width: 0.8; }
	.guideline { fill: none; stroke: #58dbe8; stroke-width: 0.7; stroke-dasharray: 10 1 2 1; }
	.ws { font: 700 8px 'DejaVu Sans', sans-serif; fill: #15263b; }
	.cad { font: 700 24px 'DejaVu Sans', sans-serif; fill: #15263b; stroke: #15263b; stroke-width: 1; }
	.stripe { fill: #f2cf55; }

	/* right side */
	.right {
		width: 178px;
		flex: none;
		display: flex;
		flex-direction: column;
		padding: 0 2px 0 1px;
		margin-left: 4px;
		box-sizing: border-box;
	}

	.copilot {
		height: 235px;
		flex: none;
		display: flex;
		flex-direction: column;
		background: var(--base);
	}

	.spark {
		width: 10px;
		height: 10px;
		margin-right: 5px;
	}

	.topic {
		height: 20px;
		display: flex;
		justify-content: flex-end;
		align-items: center;
		padding-right: 12px;
	}

	.topic button {
		height: 12px;
		padding: 0 5px;
		border-radius: 6px;
		background: #fcc800;
		color: #1c2430;
		font-size: 7px;
	}

	.chat {
		height: 157px;
		display: flex;
		align-items: flex-end;
		margin: 0 3px 0 1px;
		background: var(--dark);
		font-size: 7px;
	}

	.bubble {
		width: 83px;
		box-sizing: border-box;
		margin: 0 1px 4px 8px;
		padding: 0 8px 4px 10px;
		border-radius: 0 0 4px 4px;
		background: var(--base);
		color: #fff;
	}

	.bubble p + p {
		margin-top: 5px;
	}

	.votes {
		display: flex;
		gap: 3px;
		margin-bottom: 6px;
		opacity: 0.4;
	}

	.votes .icon {
		width: 8px;
		height: 8px;
	}

	.vscroll {
		width: 10px;
		height: 100%;
		margin-left: auto;
		padding: 3px 0;
		box-sizing: border-box;
		display: flex;
		flex-direction: column;
		align-items: center;
		background: #35414d;
	}

	.vscroll .icon {
		width: 6px;
		height: 6px;
		opacity: 0.5;
	}

	.vscroll span {
		width: 4px;
		height: 3px;
		margin: auto 0 1px;
		background: #aab3bb;
	}

	.ask {
		display: flex;
		align-items: center;
		height: 18px;
		margin: 5px 6px 0 4px;
		padding: 0 3px 0 4px;
		background: #36434f;
		font-size: 7px;
		font-style: italic;
	}

	.ask input {
		flex: 1;
		min-width: 0;
	}

	.ask input::placeholder {
		color: #c2cad0;
	}

	.ask button {
		width: 12px;
		height: 12px;
		border-radius: 50%;
		background: #fcc800;
	}

	.ask svg {
		width: 9px;
		height: 9px;
		fill: none;
		stroke: #1c2430;
	}

	.hint {
		margin: 6px 0 0 4px;
		overflow: hidden;
		white-space: nowrap;
		font-size: 7px;
		font-style: italic;
		color: #cfd6db;
	}

	.splitter {
		height: 5px;
		flex: none;
		background: linear-gradient(#59656f, #59656f) center / 20px 2px no-repeat;
	}

	.symbols {
		flex: 1;
		min-height: 0;
		display: flex;
		flex-direction: column;
		background: var(--base);
	}

	.symbols .panel-head {
		height: 15px;
	}

	.symbols .panel-tools {
		height: 22px;
		padding-left: 6px;
	}

	.symbols label {
		margin-left: 4px;
	}

	.kind {
		flex: 1;
		min-width: 0;
		height: 10px;
		display: flex;
		align-items: center;
		gap: 3px;
		padding-left: 3px;
		background: var(--dark);
	}

	.kind i {
		width: 9px;
		height: 8px;
		flex: none;
		background: #d3dd05;
	}

	.kind select {
		min-width: 0;
	}

	.symbol-box {
		height: 168px;
		flex: none;
		display: flex;
		margin: 0 4px 0 1px;
		border-top: 1px solid #22303b;
		box-sizing: border-box;
	}

	.symbol-box .tree {
		flex: 1;
		padding-left: 9px;
	}

	.symbol-box .icon {
		margin: 0 5px 0 6px;
	}

	.symbol-box .leaf .icon {
		width: 9px;
		height: 9px;
		margin: 0 4px 0 10px;
	}

	.bright-scroll {
		width: 9px;
		background: #eceded;
	}

	.bright-scroll span {
		display: block;
		width: 1px;
		height: 15px;
		margin: 9px auto;
		background: #8d8d8d;
	}

	.tabs {
		height: 17px;
		flex: none;
		display: flex;
		align-items: center;
		gap: 2px;
		padding-left: 3px;
	}

	.tabs a {
		padding: 1px 2px;
		background: #1c2935;
	}

	.tabs a.active {
		background: var(--base);
	}

	.dock {
		flex: 1;
		display: flex;
		align-items: stretch;
		background: #1c2935;
		white-space: nowrap;
	}

	.dock a {
		display: flex;
		align-items: center;
		gap: 2px;
		padding: 0 3px 0 2px;
		background: #25323e;
	}

	.dock a.active {
		background: var(--dark);
	}

	.dock .icon {
		width: 7px;
		height: 7px;
	}

	/* status bar */
	.status {
		height: 12px;
		flex: none;
		display: flex;
		align-items: center;
		margin: 0 2px 2px;
		padding: 0 12px 0 3px;
		background: var(--light);
		white-space: nowrap;
		font-size: 7px;
	}

	.ready {
		width: 50px;
		margin-right: auto;
		border-right: 1px solid #1d2a36;
	}

	.zoom { width: 53px; }
	.position { width: 54px; }
</style>
